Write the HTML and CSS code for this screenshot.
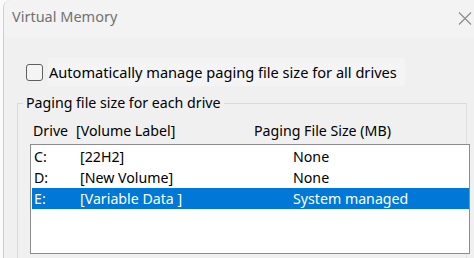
FILE: index.html
```html
<!DOCTYPE html>
<html>
<head>
<meta charset="utf-8">
<link rel="stylesheet" href="styles.css">
</head>
<body>
<div class="window">
  <div class="titlebar">
    <span class="title">Virtual Memory</span>
    <svg class="close" width="14" height="13" viewBox="0 0 14 13"><path d="M1 0.5 L13 12.5 M13 0.5 L1 12.5" stroke="#8a8a8a" stroke-width="1.1" fill="none"/></svg>
  </div>
  <div class="content">
    <label class="auto"><span class="checkbox"></span><span class="auto-text">Automatically manage paging file size for all drives</span></label>
    <fieldset class="group">
      <legend class="legend">Paging file size for each drive</legend>
      <div class="head">
        <span>Drive</span><span>[Volume Label]</span><span>Paging File Size (MB)</span>
      </div>
      <div class="listbox">
        <div class="row"><span>C:</span><span>[22H2]</span><span>None</span></div>
        <div class="row"><span>D:</span><span>[New Volume]</span><span>None</span></div>
        <div class="row selected"><span>E:</span><span>[Variable Data ]</span><span>System managed</span></div>
      </div>
    </fieldset>
  </div>
</div>
</body>
</html>
```

FILE: styles.css
```css
html, body {
  margin: 0;
  padding: 0;
  width: 474px;
  height: 258px;
  overflow: hidden;
  background: #fafafa;
}
body {
  font-family: "Noto Sans", "Open Sans", sans-serif;
  font-size: 14.2px;
  color: #000;
}
.window {
  margin-left: 3px;
  height: 258px;
  border-left: 1px solid #cdcdcd;
  border-top-left-radius: 8px;
  background: #f0f0f0;
  overflow: hidden;
}
.titlebar {
  height: 38px;
  display: flex;
  align-items: flex-start;
  justify-content: space-between;
  background: #f3f3f3;
}
.title {
  margin-left: 8px;
  margin-top: 6px;
  font-size: 14.5px;
  color: #727272;
}
.close {
  margin-top: 12px;
  margin-right: 2px;
}
.content {
  padding-top: 19px;
}
.auto {
  display: flex;
  align-items: center;
  height: 30px;
  margin-left: 22px;
}
.checkbox {
  width: 15px;
  height: 15px;
  border: 1px solid #5f5f5f;
  border-radius: 3px;
  background: #f4f4f4;
}
.auto-text {
  margin-left: 5px;
  padding: 4px 8px 4px 1px;
  font-size: 14.6px;
  background: #f4f4f4;
}
.group {
  margin: 6px 0 0 13px;
  padding: 0;
  width: 448px;
  height: 200px;
  border: 1px solid #dadada;
  border-right-color: #e2e2e2;
  min-width: 0;
}
.legend {
  margin-left: 5px;
  padding: 0 3px;
  line-height: 20px;
}
.head {
  display: grid;
  grid-template-columns: 43px 178px auto;
  padding-left: 15px;
  margin-top: 7px;
  height: 22px;
  line-height: 22px;
}
.listbox {
  margin: 2px 0 0 12px;
  width: 440px;
  height: 110px;
  background: #fff;
  border: 1px solid #8c8c8c;
  padding: 1px 0 0 1px;
  box-sizing: border-box;
}
.row {
  display: grid;
  grid-template-columns: 46px 213px auto;
  padding-left: 2px;
  height: 21px;
  line-height: 21px;
}
.row.selected {
  background: #0078d7;
  color: #fff;
}
```
